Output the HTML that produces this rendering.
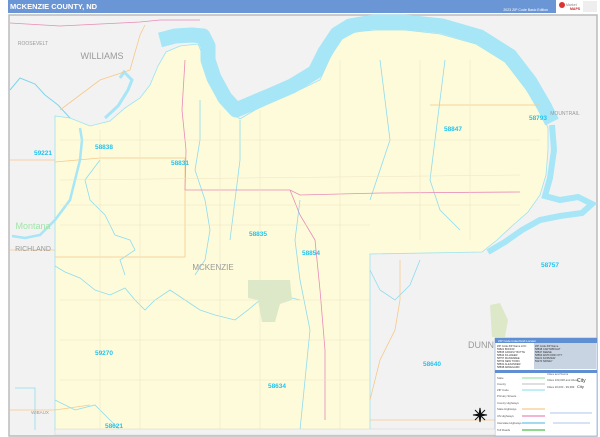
<!DOCTYPE html>
<html><head><meta charset="utf-8"><style>
html,body{margin:0;padding:0;width:600px;height:437px;overflow:hidden;background:#fff;font-family:"Liberation Sans",sans-serif}
</style></head><body>
<svg width="600" height="437" viewBox="0 0 600 437" xmlns="http://www.w3.org/2000/svg" font-family="Liberation Sans, sans-serif">
<rect x="0" y="0" width="600" height="437" fill="#fff"/>
<rect x="8" y="0" width="548" height="13" fill="#6b96d6"/>
<text x="10" y="9" font-size="7.5" font-weight="bold" fill="#fff">MCKENZIE COUNTY, ND</text>
<text x="548" y="11" font-size="3.5" fill="#fff" text-anchor="end">2023 ZIP Code Basic Edition</text>
<rect x="556" y="1" width="25" height="11" fill="#fff"/>
<circle cx="562" cy="5" r="3" fill="#d33"/>
<text x="566" y="6" font-size="3.5" fill="#888">Market</text>
<text x="570" y="10" font-size="3.5" fill="#c22" font-weight="bold">MAPS</text>
<rect x="583" y="1" width="14" height="11" fill="#eee"/>
<rect x="9" y="15" width="588" height="421" fill="#f2f2f2" stroke="#bbb" stroke-width="1.5"/>
<path d="M55,430 L55,116 L70,118 L90,126 L110,121 L125,108 L140,98 L150,85 L158,66 L166,52 L180,46 L198,44 L203,56 L208,78 L218,100 L230,112 L240,119 L255,110 L272,102 L295,92 L320,80 L330,58 L340,40 L355,32 L375,30 L405,30 L440,34 L476,44 L505,62 L525,88 L540,110 L548,128 L548,150 L546,175 L540,195 L528,212 L512,226 L497,240 L482,252 L370,254 L370,430 Z" fill="#fdfbda" stroke="#9ce3ef" stroke-width="0.8"/>
<path d="M160,40 L175,36 L192,35 L203,36 L208,46 L208,60 L214,78 L225,98 L236,110 L250,104 L269,96 L292,86 L315,72 L325,52 L337,34 L350,26 L373,22 L404,22 L442,26 L480,37 L510,56 L530,82 L544,106 L552,122" fill="none" stroke="#a6e6f7" stroke-width="15" stroke-linejoin="round"/>
<path d="M552,125 L554,150 L550,178 L545,196 L560,200 L578,197 L592,204 L582,213 L560,216 L540,220 L522,230 L505,242 L488,252" fill="none" stroke="#a6e6f7" stroke-width="6"/>
<path d="M105,118 L118,106 L128,90 L132,80 L124,72 L120,78" fill="none" stroke="#a6e6f7" stroke-width="3"/>
<path d="M10,90 L20,78 L35,84 L45,95 L58,105 L70,118" fill="none" stroke="#7fd6ec" stroke-width="1"/>
<path d="M80,128 L82,140 L80,160 L75,180 L70,200 L55,220 L40,235 L25,238 L12,236" fill="none" stroke="#a6e6f7" stroke-width="2.5"/>
<g fill="none" stroke="#8fdcee" stroke-width="0.8">
<path d="M55,266 L65,272 L80,278 L95,290 L110,295 L125,288 L135,300 L145,310 L155,300 L170,290 L185,300 L200,310 L215,315 L235,320 L248,310 L260,300 L280,295 L300,300"/>
<path d="M100,160 L85,180 L90,200 L105,215 L115,235 L130,240 L135,250 L120,260 L125,275"/>
<path d="M200,100 L200,140 L195,170 L205,200 L210,230 L205,260 L195,275"/>
<path d="M240,120 L240,160 L235,200 L230,240"/>
<path d="M300,200 L295,240 L300,280 L310,330 L305,380 L300,430"/>
<path d="M445,60 L440,100 L435,140 L430,180 L440,210 L460,230"/>
<path d="M380,60 L385,100 L390,140 L380,170 L370,200"/>
<path d="M370,270 L380,290 L395,300 L410,285 L420,260"/>
<path d="M55,400 L75,410 L95,405 L110,420 L120,430"/>
<path d="M15,388 L35,388 L35,430"/>
</g>
<g fill="none" stroke-width="0.8">
<path d="M55,162 L100,158 L150,158 L185,158 L185,190" stroke="#f6c98c"/>
<path d="M55,257 L130,257 L185,257 L185,190" stroke="#f6c98c"/>
<path d="M10,160 L55,160" stroke="#f6c98c"/>
<path d="M10,250 L55,250" stroke="#f6c98c"/>
<path d="M185,190 L290,190 L300,195 L380,193 L520,192" stroke="#e88bb8"/>
<path d="M185,60 L182,110 L186,150 L185,190" stroke="#e88bb8"/>
<path d="M290,190 L300,215 L315,240 L320,290 L325,350 L325,420" stroke="#e88bb8"/>
<path d="M10,23 L60,26 L140,22 L160,20 L200,20" stroke="#e88bb8"/>
<path d="M400,260 L400,300 L395,330 L380,360 L370,400" stroke="#f6c98c"/>
<path d="M370,420 L495,420" stroke="#f6c98c"/>
<path d="M430,105 L540,105" stroke="#f6c98c"/>
<path d="M10,410 L55,410 L90,405" stroke="#f6c98c"/>
<path d="M60,110 L100,80 L130,70 L140,35 L145,25" stroke="#f6c98c"/>
</g>
<g stroke="#eee3c0" stroke-width="0.5" fill="none">
<path d="M60,205 L520,205 M60,225 L370,225 M60,180 L520,175 M60,140 L540,140 M100,130 L100,430 M140,120 L140,430 M220,110 L220,430 M260,110 L260,430 M340,60 L340,430 M420,60 L420,240 M470,60 L470,240 M60,300 L370,300 M60,340 L370,340 M60,380 L370,380"/>
</g>
<path d="M248,280 L290,280 L292,300 L280,304 L275,322 L262,322 L258,300 L248,298 Z" fill="#dde8c8"/>
<path d="M490,305 L500,303 L508,320 L505,337 L492,337 Z" fill="#dde8c8"/>
<g fill="#9a9a9a" text-anchor="middle">
<text x="102" y="59" font-size="9">WILLIAMS</text>
<text x="33" y="45" font-size="5">ROOSEVELT</text>
<text x="565" y="115" font-size="5">MOUNTRAIL</text>
<text x="33" y="251" font-size="7">RICHLAND</text>
<text x="213" y="270" font-size="8">MCKENZIE</text>
<text x="481" y="348" font-size="9">DUNN</text>
<text x="40" y="414" font-size="4.5">WIBAUX</text>
<text x="33" y="229" font-size="9" fill="#9fe6a8">Montana</text>
</g>
<g fill="#22c3f0" font-size="6.5" font-weight="bold" text-anchor="middle">
<text x="104" y="149">58838</text>
<text x="180" y="165">58831</text>
<text x="43" y="155">59221</text>
<text x="453" y="131">58847</text>
<text x="538" y="120">58793</text>
<text x="258" y="236">58835</text>
<text x="311" y="255">58854</text>
<text x="550" y="267">58757</text>
<text x="104" y="355">59270</text>
<text x="432" y="366">58640</text>
<text x="277" y="388">58634</text>
<text x="114" y="428">58621</text>
</g>
<rect x="495" y="338" width="102" height="98" fill="#fff" stroke="#7ea0d0" stroke-width="0.6"/>
<rect x="495" y="338" width="102" height="5" fill="#5f8fd2"/>
<text x="498" y="342" font-size="3" fill="#fff">ZIP Code Index/Grid Locator</text>
<rect x="534" y="343" width="62" height="26" fill="#c9d4e2"/>
<g font-size="2.6" fill="#333">
<text x="497" y="347">ZIP Code   ZIP Name   LOC</text>
<text x="497" y="350">59821 BONOR</text><text x="497" y="353">58835 GRASSY BUTTE</text>
<text x="497" y="356">58842 KILLDEER</text><text x="497" y="359">58757 MANDAREE</text>
<text x="497" y="362">58763 NEW TOWN</text><text x="497" y="365">58831 ALEXANDER</text>
<text x="497" y="368">58838 ARNEGARD</text>
<text x="535" y="347">ZIP Code  ZIP Name</text>
<text x="535" y="350">58838 CARTWRIGHT</text><text x="535" y="353">58847 KEENE</text>
<text x="535" y="356">58854 WATFORD CITY</text><text x="535" y="359">59221 FAIRVIEW</text>
<text x="535" y="362">59270 SIDNEY</text>
</g>
<rect x="495" y="370" width="102" height="3" fill="#5f8fd2"/>
<g font-size="2.8" fill="#555">
<text x="497" y="379">State</text><text x="497" y="385">County</text><text x="497" y="391">ZIP Code</text>
<text x="497" y="397">Primary Streets</text><text x="497" y="404">County Highways</text>
<text x="497" y="410">State Highways</text><text x="497" y="417">US Highways</text>
<text x="497" y="424">Interstate Highways</text><text x="497" y="431">Toll Roads</text>
<text x="547" y="375">Cities and Towns</text>
<text x="547" y="381">Cities 100,000 and Above</text><text x="577" y="382" font-size="5" fill="#333">City</text>
<text x="547" y="388">Cities 20,000 - 99,999</text><text x="577" y="388" font-size="4" fill="#333">City</text>
</g>
<g stroke-width="1.2">
<line x1="522" y1="378" x2="545" y2="378" stroke="#9fe6a8"/>
<line x1="522" y1="384" x2="545" y2="384" stroke="#ccc"/>
<line x1="522" y1="390" x2="545" y2="390" stroke="#9ce3ef"/>
<line x1="522" y1="409" x2="545" y2="409" stroke="#f6c98c"/>
<line x1="522" y1="416" x2="545" y2="416" stroke="#e88bb8"/>
<line x1="522" y1="423" x2="545" y2="423" stroke="#6bc4e8"/>
<line x1="522" y1="430" x2="545" y2="430" stroke="#4cc24c"/>
</g>
<line x1="550" y1="413" x2="592" y2="413" stroke="#5f8fd2" stroke-width="0.5"/>
<line x1="553" y1="423" x2="590" y2="423" stroke="#5f8fd2" stroke-width="0.5"/>
<g stroke="#111" stroke-width="1" fill="#111">
<path d="M480,408 L481,415 L480,422 L479,415 Z"/>
<path d="M473,415 L480,414 L487,415 L480,416 Z"/>
<line x1="475" y1="410" x2="485" y2="420"/><line x1="485" y1="410" x2="475" y2="420"/>
</g>
<rect x="55" y="429" width="440" height="6" fill="#f2f2f2" stroke="#ccc" stroke-width="0.4"/>
</svg>
</body></html>
